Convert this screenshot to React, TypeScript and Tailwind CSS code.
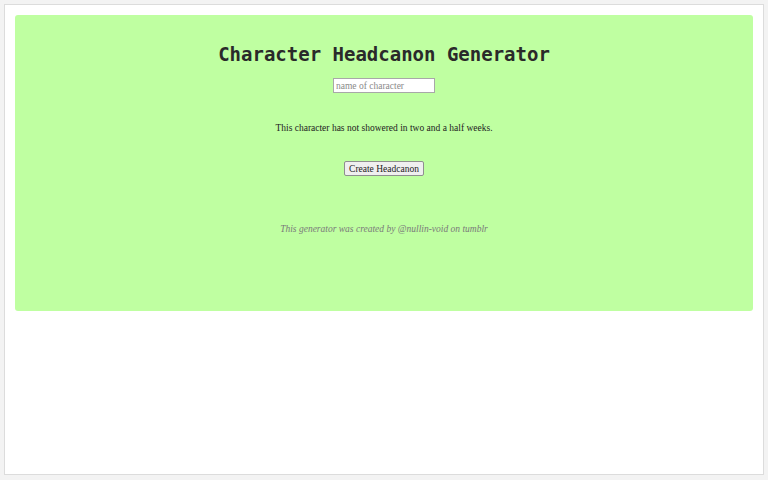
export default function App() {
  return (
    <div className="h-[480px] w-[768px] bg-[#f3f3f3] p-[4px]">
      <div className="h-[471px] w-[760px] border border-[#dcdcdc] bg-white p-[10px]">
        <div className="flex h-[296px] flex-col items-center rounded-[3px] bg-[#bfffa1] pt-[27px] font-['Liberation_Serif',serif] text-[9.5px] text-[#222]">
          <h1 className="font-['DejaVu_Sans_Mono',monospace] text-[19px] font-bold leading-[25px] text-[#2a2a2a]">
            Character Headcanon Generator
          </h1>
          <input
            type="text"
            placeholder="name of character"
            className="mt-[11px] h-[15px] w-[102px] border border-[#a8a8a8] bg-white px-[2px] text-[9.5px] leading-[13px] text-[#222] placeholder:text-[#8a8a8a]"
          />
          <p className="mt-[29px] leading-[13px]">
            This character has not showered in two and a half weeks.
          </p>
          <button className="mt-[26px] h-[15px] rounded-[2px] border border-[#8f8f8f] bg-[#efefef] px-[4px] text-[9.5px] leading-[12px] text-[#222]">
            Create Headcanon
          </button>
          <p className="mt-[47px] italic leading-[13px] text-[#7a7a7a]">
            This generator was created by @nullin-void on tumblr
          </p>
        </div>
      </div>
    </div>
  );
}
